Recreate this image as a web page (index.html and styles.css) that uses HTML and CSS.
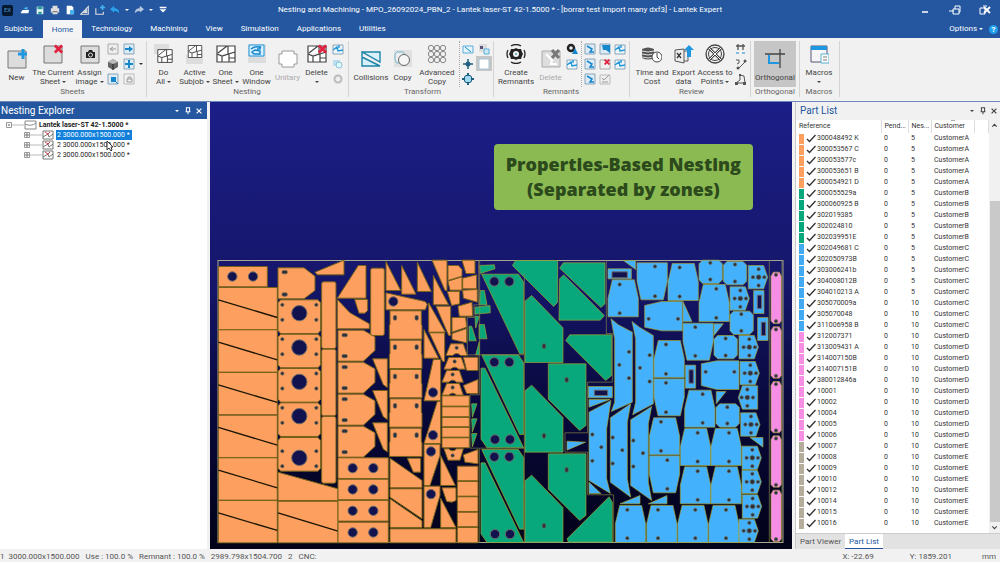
FILE: index.html
```html
<!DOCTYPE html>
<html lang="en">
<head>
    <meta charset="UTF-8">
    <meta name="viewport" content="width=device-width, initial-scale=1.0">
    <title>Nesting and Machining - Lantek Expert</title>
    <link rel="stylesheet" href="styles.css">
</head>
<body>
    <!-- shared icon shapes -->
    <svg class="defs" aria-hidden="true">
        <defs>
            <symbol id="sheet" viewBox="0 0 20 20"><path d="M1 2h18v17H1z" fill="#dcdcdc" stroke="#777"/></symbol>
            <symbol id="nest" viewBox="0 0 20 20"><path d="M1 2h18v16H1zM1 10l5 2 13-4M12 2v8M6 12v6M13 10v8M13 14h6M2 9l9-7" fill="#fff" stroke="#444" stroke-width="1.2"/></symbol>
            <symbol id="cross" viewBox="0 0 10 10"><path d="M1 1l8 8M9 1l-8 8" stroke="#e0203c" stroke-width="3"/></symbol>
            <symbol id="s-box" viewBox="0 0 12 12"><path d="M1 1h10v10H1z" fill="#dcebf5" stroke="#8aa5b8"/></symbol>
            <symbol id="s-nest" viewBox="0 0 12 12"><path d="M1 2h10v9H1z" fill="#eef6fb" stroke="#8aa5b8"/><path d="M1 7l4-3 1 4 5-1M7 2v3" fill="none" stroke="#2196d8" stroke-width="1.4"/></symbol>
            <symbol id="tick" viewBox="0 0 10 9"><path d="M1 5l2.500 2.500L9.500 1" fill="none" stroke="#333" stroke-width="1.300"/></symbol>
        </defs>
    </svg>

    <header class="titlebar">
        <div class="quick">
            <span class="logo">EX</span>
            <button aria-label="Open"><svg viewBox="0 0 12 12"><path d="M1 9l2-3h8l-1 4H1z" fill="#fff"/><path d="M4 4l5-2v4" fill="#46b4f0"/></svg></button>
            <button aria-label="Save"><svg viewBox="0 0 12 12"><path d="M2 2h8v9H2z" fill="#e8f6f4"/><path d="M3 2h6v3H3zM4 8h4v3H4z" fill="#279c9c"/></svg></button>
            <button aria-label="Print"><svg viewBox="0 0 12 12"><path d="M3 1h6v3H3zM1 4h10v5H1zM3 8h6v3H3z" fill="#ddd"/><path d="M3 8h6" stroke="#555"/></svg></button>
            <button aria-label="Report"><svg viewBox="0 0 12 12"><path d="M2 1h6l2 2v8H2z" fill="#fff"/><path d="M6 6h5v5H6z" fill="#46b4f0"/></svg></button>
            <button aria-label="Measure"><svg viewBox="0 0 12 12"><path d="M1 11L10 2v9zM5 9h3V6z" fill="none" stroke="#ddd" stroke-width="1.300"/></svg></button>
            <button aria-label="Add sheet"><svg viewBox="0 0 12 12"><path d="M1 4v7h9V8" fill="none" stroke="#ddd" stroke-width="1.300"/><path d="M9 0v6M6 3h6" stroke="#46b4f0" stroke-width="2"/></svg></button>
            <button aria-label="Undo"><svg viewBox="0 0 12 12"><path d="M0 5l5-4v3q6 0 6 6-2-3-6-3v2z" fill="#2aa2ec"/></svg></button>
            <i class="caret"></i>
            <button aria-label="Redo"><svg viewBox="0 0 12 12"><path d="M12 5L7 1v3Q1 4 1 10q2-3 6-3v2z" fill="#b9c8df"/></svg></button>
            <i class="caret"></i>
            <button aria-label="Customize"><svg viewBox="0 0 12 12"><path d="M2 2h8v2H2zM2 5h8l-4 4z" fill="#fff"/></svg></button>
        </div>
        <h1>Nesting and Machining - MPO_26092024_PBN_2 - Lantek laser-ST 42-1.5000 * - [borrar test import many dxf3] - Lantek Expert</h1>
        <div class="window-buttons">
            <button aria-label="Minimize"><svg viewBox="0 0 12 12"><path d="M3 8h6" stroke="#fff" stroke-width="1.500"/></svg></button>
            <button aria-label="Restore"><svg viewBox="0 0 12 12"><path d="M0 7h5M4 5h6v5H4zM6 5V2h5v6h-1" fill="none" stroke="#fff"/></svg></button>
            <button aria-label="Close"><svg viewBox="0 0 12 12"><path d="M1 4h5v6H1zM4 2h4" fill="none" stroke="#fff"/><path d="M5 3l6 6M11 3L5 9" stroke="#fff" stroke-width="1.800"/></svg></button>
        </div>
    </header>

    <nav class="menu">
        <a href="#subjobs">Subjobs</a>
        <a href="#home" class="active">Home</a>
        <a href="#technology">Technology</a>
        <a href="#machining">Machining</a>
        <a href="#view">View</a>
        <a href="#simulation">Simulation</a>
        <a href="#applications">Applications</a>
        <a href="#utilities">Utilities</a>
        <a href="#options" class="options">Options <i class="caret"></i></a>
        <button class="help" aria-label="Help">?</button>
    </nav>

    <div class="ribbon">
        <section class="group">
            <div class="tools">
                <button class="tool"><svg viewBox="0 0 20 20"><use href="#sheet"/><path d="M16 0v10M11 5h10" stroke="#1e96e0" stroke-width="3"/></svg>New</button>
                <button class="tool large"><svg viewBox="0 0 20 20"><use href="#sheet"/><use href="#cross" x="11" width="9" height="10"/></svg>The Current<br>Sheet <i class="caret"></i></button>
                <button class="tool"><svg viewBox="0 0 20 20"><use href="#sheet"/><path d="M6 8h2l1-2h3l1 2h2v6H6z" fill="#222"/><circle cx="10.500" cy="11" r="2" fill="#222" stroke="#ddd"/></svg>Assign<br>image <i class="caret"></i></button>
                <div class="small cols-2">
                    <button aria-label="Previous sheet"><svg viewBox="0 0 12 12"><path d="M1 1h10v10H1z" fill="#eee" stroke="#aaa"/><path d="M9 6H4M6 4L3 6l3 2" stroke="#999" fill="none"/></svg></button>
                    <button aria-label="Next sheet"><svg viewBox="0 0 12 12"><use href="#s-box"/><path d="M2 5h4V3l4 3-4 3V7H2z" fill="#1687cc"/></svg></button>
                    <button aria-label="3D sheet"><svg viewBox="0 0 12 12"><path d="M1 4l5-3 5 3v5l-5 3-5-3z" fill="#666"/><path d="M1 4l5 2 5-2-5-3z" fill="#bbb"/><path d="M6 6v6" stroke="#222"/></svg></button>
                    <button aria-label="Add"><svg viewBox="0 0 12 12"><use href="#s-box"/><path d="M6 2v8M2 6h8" stroke="#1687cc" stroke-width="2"/></svg></button>
                    <button aria-label="Corner"><svg viewBox="0 0 12 12"><use href="#s-box"/><path d="M4 4h5v5H4z" fill="#1687cc"/><path d="M8 8l3 3" stroke="#1687cc"/></svg></button>
                    <button aria-label="Lock"><svg viewBox="0 0 12 12"><path d="M1 1h10v10H1z" fill="#f3f3f3" stroke="#bbb"/><path d="M4 6h5v3H4zM5 6V4h3v2" stroke="#999" fill="none"/></svg></button>
                </div>
                <button class="more" aria-label="More"><i class="caret"></i></button>
            </div>
            <h2>Sheets</h2>
        </section>
        <section class="group">
            <div class="tools">
                <button class="tool"><svg viewBox="0 0 20 20"><path d="M0 0h15v10H0z" fill="#ddd"/><use href="#nest" x="2" y="4" width="18" height="16"/></svg>Do<br>All <i class="caret"></i></button>
                <button class="tool"><svg viewBox="0 0 20 20"><path d="M1 11h17v9H1z" fill="#ddd"/><use href="#nest" x="1" width="18" height="15"/></svg>Active<br>Subjob <i class="caret"></i></button>
                <button class="tool"><svg viewBox="0 0 20 20"><use href="#nest"/></svg>One<br>Sheet <i class="caret"></i></button>
                <button class="tool"><svg viewBox="0 0 20 20"><path d="M1 0h18v19H1z" fill="#ddd"/><path d="M2 1h15v11H2z" fill="#d8f0fc" stroke="#1e96e0"/><path d="M4 5q5-4 10-1M13 2v3h-3M5 8l3-2 5 1v3H7z" fill="none" stroke="#1687cc" stroke-width="1.500"/></svg>One<br>Window</button>
                <button class="tool" disabled><svg viewBox="0 0 20 20"><path d="M4 2h12v3h3v10h-3v3H4v-3H1V5h3z" fill="#fff" stroke="#999"/></svg>Unitary</button>
                <button class="tool narrow"><svg viewBox="0 0 20 20"><use href="#nest"/><use href="#cross" x="11" width="9" height="10"/></svg>Delete<br><i class="caret"></i></button>
                <div class="small">
                    <button aria-label="Nest options"><svg viewBox="0 0 12 12"><use href="#s-nest"/></svg></button>
                    <button aria-label="Nest search"><svg viewBox="0 0 12 12"><path d="M1 2h7v6H1z" fill="#bcdff0"/><circle cx="7" cy="7" r="3" fill="#dff" stroke="#8bbcd6"/></svg></button>
                    <button aria-label="Stop"><svg viewBox="0 0 12 12"><circle cx="6" cy="6" r="3.500" fill="#eee" stroke="#bbb" stroke-width="2"/></svg></button>
                </div>
            </div>
            <h2>Nesting</h2>
        </section>
        <section class="group indent">
            <div class="tools">
                <button class="tool wide"><svg viewBox="0 0 20 20"><path d="M1 7V3l18 10V3H1M19 17H1V8z" fill="#d8f0fa" stroke="#1c84a8" stroke-width="1.400"/></svg>Collisions</button>
                <button class="tool narrow"><svg viewBox="0 0 20 20"><path d="M1 1h18v17H1z" fill="#e0e0e0"/><path d="M4 3h6l2 3v5l-3 3H4l-2-3V5z" fill="#eee" stroke="#6fb5cc"/><circle cx="11" cy="11" r="5.500" fill="#f6f6f6" stroke="#666"/></svg>Copy</button>
                <button class="tool large"><svg viewBox="0 0 20 20"><g fill="#f0f0f0" stroke="#888"><circle cx="4" cy="4" r="2.700"/><circle cx="10" cy="4" r="2.700"/><circle cx="16" cy="4" r="2.700"/><circle cx="4" cy="10" r="2.700"/><circle cx="10" cy="10" r="2.700"/><circle cx="16" cy="10" r="2.700"/><circle cx="4" cy="16" r="2.700"/><circle cx="10" cy="16" r="2.700"/><circle cx="16" cy="16" r="2.700"/></g></svg>Advanced<br>Copy</button>
                <div class="small cols-2 dotted">
                    <button aria-label="Scale"><svg viewBox="0 0 12 12"><path d="M1 3h10v7H1z" fill="#e3f4fc" stroke="#5ab0d8"/><path d="M3 4l6 5" stroke="#1687cc"/></svg></button>
                    <button aria-label="Align"><svg viewBox="0 0 12 12"><path d="M1 1h8v8H1z" fill="#ddd"/><path d="M2 3h3v3H2z" fill="#557"/><path d="M6 6h5v5H6z" fill="#cdeaf8" stroke="#5ab0d8"/></svg></button>
                    <button aria-label="Move"><svg viewBox="0 0 12 12"><path d="M6 1v10M1 6h10" stroke="#20607f" stroke-width="1.500"/><circle cx="6" cy="6" r="2.500" fill="#20607f"/></svg></button>
                    <button aria-label="Frame" class="pressed"><svg viewBox="0 0 12 12"><path d="M1 1h10v10H1z" fill="#fff" stroke="#a9c4d4"/></svg></button>
                    <button aria-label="Center"><svg viewBox="0 0 12 12"><circle cx="6" cy="6" r="4" fill="#9fdaf0" stroke="#20607f"/><path d="M6 0v3M6 9v3M0 6h3M9 6h3" stroke="#20607f" stroke-width="2"/></svg></button>
                </div>
            </div>
            <h2>Transform</h2>
        </section>
        <section class="group">
            <div class="tools">
                <button class="tool large"><svg viewBox="0 0 20 20"><path d="M5 2q5-3 10 0M5 18q5 3 10 0M2 6q-2 4 0 8M18 6q2 4 0 8" fill="none" stroke="#222" stroke-width="1.300"/><path d="M10 4l2 1h3l1 3 1 2-1 2-1 3h-3l-2 1-2-1H5l-1-3-1-2 1-2 1-3h3z" fill="#222"/><circle cx="10" cy="10" r="3" fill="#f1f1f1"/><circle cx="10" cy="10" r="1" fill="#48a8b8"/></svg>Create<br>Remnants</button>
                <button class="tool narrow" disabled><svg viewBox="0 0 20 20"><path d="M1 2h18v16H1z" fill="#ddd" stroke="#aaa"/><path d="M5 5l6 6-1 4h6" fill="none" stroke="#fff" stroke-width="2"/><path d="M11 1l7 8M18 1l-7 8" stroke="#777" stroke-width="3"/></svg>Delete</button>
                <div class="small">
                    <button aria-label="Remnant settings"><svg viewBox="0 0 12 12"><circle cx="5" cy="5" r="3" fill="none" stroke="#222" stroke-width="2.500"/><path d="M6 11l3-6 3 6z" fill="#1687cc"/></svg></button>
                    <button aria-label="Remnant sheet"><svg viewBox="0 0 12 12"><use href="#s-nest"/></svg></button>
                </div>
                <div class="small cols-3 dotted">
                    <button aria-label="Remnant 1"><svg viewBox="0 0 12 12"><use href="#s-box"/><path d="M3 3l5 3-2 3h4" fill="none" stroke="#1687cc" stroke-width="1.500"/></svg></button>
                    <button aria-label="Remnant 2"><svg viewBox="0 0 12 12"><use href="#s-box"/><path d="M3 2h8v8L7 7H4z" fill="#1687cc"/></svg></button>
                    <button aria-label="Remnant 3"><svg viewBox="0 0 12 12"><use href="#s-nest"/></svg></button>
                    <button aria-label="Remnant 4"><svg viewBox="0 0 12 12"><use href="#s-box"/><path d="M3 3l5 3-2 3h4" fill="none" stroke="#1687cc" stroke-width="1.500"/></svg></button>
                    <button aria-label="Delete remnant"><svg viewBox="0 0 12 12"><path d="M1 2h10v9H1z" fill="#eee" stroke="#aaa"/><use href="#cross" x="5" y="1" width="6" height="6"/></svg></button>
                    <button aria-label="Remnant 5"><svg viewBox="0 0 12 12"><use href="#s-nest"/></svg></button>
                    <button aria-label="Remnant 6"><svg viewBox="0 0 12 12"><use href="#s-box"/><path d="M3 3l5 3-2 3h4" fill="none" stroke="#1687cc" stroke-width="1.500"/></svg></button>
                    <button aria-label="Remnant 7"><svg viewBox="0 0 12 12"><path d="M1 2h10v9H1z" fill="#eee" stroke="#bbb"/><path d="M3 5l2 2 5-5M3 9h6" stroke="#999" fill="none"/></svg></button>
                </div>
            </div>
            <h2>Remnants</h2>
        </section>
        <section class="group indent">
            <div class="tools">
                <button class="tool wide"><svg viewBox="0 0 20 20"><path d="M0 5q6-3 12 0v9q-6 3-12 0z" fill="#555"/><path d="M0 7q6 2 12 0M0 10q6 2 12 0M0 13q6 2 12 0" stroke="#ddd" fill="none"/><circle cx="15" cy="13" r="5" fill="#fff" stroke="#444"/><path d="M15 9v4l2 2" stroke="#444" fill="none"/></svg>Time and<br>Cost</button>
                <button class="tool narrow"><svg viewBox="0 0 20 20"><path d="M1 6l9-1v14l-9-2zM10 7h4v10h-4" fill="#eee" stroke="#555"/><path d="M3 9l4 5M7 9l-4 5" stroke="#333" stroke-width="1.300"/><path d="M13 13V6h-3l5-5 5 5h-3v7z" fill="#1e96e0"/></svg>Export<br>data</button>
                <button class="tool wide"><svg viewBox="0 0 20 20"><circle cx="10" cy="10" r="9" fill="none" stroke="#444" stroke-width="1.300"/><circle cx="10" cy="10" r="6.500" fill="none" stroke="#444"/><path d="M4 4l12 12M16 4L4 16" stroke="#444" stroke-width="2.500"/><path d="M4 4l12 12M16 4L4 16" stroke="#fff"/></svg>Access to<br>Points <i class="caret"></i></button>
                <div class="small">
                    <button aria-label="Distance"><svg viewBox="0 0 12 12"><path d="M1 3h9M3 1v6M8 1v6" stroke="#555" stroke-width="1.300"/><path d="M1 10h3M7 10h3" stroke="#1687cc"/></svg></button>
                    <button aria-label="Query"><svg viewBox="0 0 12 12"><path d="M1 2h3v3L2 6M3 11l8-8" stroke="#555" fill="none"/><circle cx="3" cy="10" r="1.500" fill="#555"/><circle cx="10" cy="3" r="1.500" fill="#555"/></svg></button>
                    <button aria-label="Area"><svg viewBox="0 0 12 12"><path d="M1 10l4-3V2l4 1 1 7z" stroke="#555" fill="none"/><path d="M0 9h3v3H0zM8 9h3v3H8zM4 1h2v2H4z" fill="#555"/></svg></button>
                </div>
            </div>
            <h2>Review</h2>
        </section>
        <section class="group padded">
            <div class="tools">
                <button class="tool large pressed"><svg viewBox="0 0 20 20"><path d="M0 5h20M15 0v19" stroke="#444" stroke-width="1.300"/><path d="M4 6v8h10" fill="none" stroke="#1e96e0" stroke-width="2"/></svg>Orthogonal</button>
            </div>
            <h2>Orthogonal</h2>
        </section>
        <section class="group">
            <div class="tools">
                <button class="tool wide"><svg viewBox="0 0 20 20"><path d="M2 2h16v16H2z" fill="#f6f6f6" stroke="#557"/><path d="M2 2h16v4H2z" fill="#1e96e0"/><path d="M12 10h8v9h-8z" fill="#fff" stroke="#5ab0d8"/><path d="M14 13h4M14 16h4" stroke="#777"/></svg>Macros<br><i class="caret"></i></button>
            </div>
            <h2>Macros</h2>
        </section>
    </div>

    <main class="workspace">
        <aside class="explorer">
            <div class="panel-title">
                <h2>Nesting Explorer</h2>
                <button aria-label="Menu"><i class="caret"></i></button>
                <button aria-label="Pin"><svg viewBox="0 0 10 10"><path d="M3 1h4v5H3zM2 6h6M5 6v3" fill="none" stroke="currentColor" stroke-width="1.300"/></svg></button>
                <button aria-label="Close"><svg viewBox="0 0 10 10"><path d="M2 2l6 6M8 2L2 8" stroke="currentColor" stroke-width="1.500"/></svg></button>
            </div>
            <ul class="tree">
                <li class="root"><svg class="toggle" viewBox="0 0 18 10"><path d="M6 5h12" stroke="#bbb"/><path d="M.5 2.500h5v5h-5z" fill="#fff" stroke="#999"/><path d="M2 5h2" stroke="#555"/></svg><svg viewBox="0 0 14 10"><path d="M1 1h11v8H1zM1 4q6 3 11-1" fill="#fff" stroke="#888"/></svg><b>Lantek laser-ST 42-1.5000 *</b></li>
                <li><svg class="toggle" viewBox="0 0 18 10"><path d="M6 5h12" stroke="#bbb"/><path d="M.5 2.500h5v5h-5z" fill="#fff" stroke="#999"/><path d="M1 5h4M3 3v4" stroke="#777"/></svg><svg viewBox="0 0 14 10"><path d="M1 1h10v8H1zM1 7l5-3 1 3 4-3" fill="#fff" stroke="#777"/><path d="M3 2l3 2M5 5l3-3" stroke="#d04050"/></svg><span class="selected">2 3000.000x1500.000 *</span></li>
                <li><svg class="toggle" viewBox="0 0 18 10"><path d="M6 5h12" stroke="#bbb"/><path d="M.5 2.500h5v5h-5z" fill="#fff" stroke="#999"/><path d="M1 5h4M3 3v4" stroke="#777"/></svg><svg viewBox="0 0 14 10"><path d="M1 1h10v8H1zM1 7l5-3 1 3 4-3" fill="#fff" stroke="#777"/><path d="M3 2l3 2M5 5l3-3" stroke="#d04050"/></svg><span>2 3000.000x1500.000 *</span><svg class="cursor" viewBox="0 0 8 12"><path d="M1 1v9l2-2 2 3 1-1-1-3h2z" fill="#fff" stroke="#333"/></svg></li>
                <li><svg class="toggle" viewBox="0 0 18 10"><path d="M6 5h12" stroke="#bbb"/><path d="M.5 2.500h5v5h-5z" fill="#fff" stroke="#999"/><path d="M1 5h4M3 3v4" stroke="#777"/></svg><svg viewBox="0 0 14 10"><path d="M1 1h10v8H1zM1 7l5-3 1 3 4-3" fill="#fff" stroke="#777"/><path d="M3 2l3 2M5 5l3-3" stroke="#d04050"/></svg><span>2 3000.000x1500.000 *</span></li>
            </ul>
        </aside>

        <section class="canvas">
            <svg class="drawing" viewBox="210 102 582 446" role="img" aria-label="Nested sheet">
                <defs>
                    <circle id="hole" r="14" class="hole"/>
                    <circle id="eye" r="5" class="eye"/>
                    <rect id="slot" x="-8" y="-5" width="16" height="10" rx="4" class="eye"/>
                    <rect id="vslot" x="-5" y="-7" width="10" height="14" rx="4" class="eye"/>
                    <g id="wedge"><path d="M13 0h177v127H13z"/><path d="M13 37l177 53" class="cut"/></g>
                    <g id="plate">
                        <path d="M200 0h112l8 9v83l-8 9H200l-8-9V9z"/>
                        <circle cx="256" cy="40" r="23" class="hole"/>
                        <use href="#eye" x="205" y="15"/><use href="#eye" x="307" y="15"/><use href="#eye" x="205" y="60"/><use href="#eye" x="307" y="60"/>
                    </g>
                    <g id="hexa"><path d="M-36 0h76l35 20v41l-35 32h-76z"/><use href="#slot" x="-16" y="15"/><use href="#slot" x="-16" y="78"/></g>
                    <g id="pair"><path d="M-36 0h151v62H-36z"/><use href="#hole" x="8" y="31"/><use href="#hole" x="70" y="31"/></g>
                    <g id="block"><path d="M120 0h94v42h2v43h-98V42h2z"/><use href="#vslot" x="135" y="21"/><use href="#vslot" x="200" y="21"/></g>
                    <g id="ear"><path d="M14 0h38l12 35H44q-12-12-24 0H0z"/><use href="#eye" x="32" y="12"/></g>
                    <path id="trap" d="M13 0h66l12 55v56H0V55z"/>
                    <path id="trap-down" d="M0 0h91v55l-12 56H12L0 55z"/>
                    <path id="octo" d="M11 0h48l11 11v48l-11 11H11L0 59V11z"/>
                    <g id="five"><path d="M0 0h46l12 35-12 35H0z"/><circle cx="31" cy="35" r="7" class="eye"/><use href="#eye" x="31" y="11"/><use href="#eye" x="31" y="60"/><use href="#eye" x="14" y="35"/><use href="#eye" x="48" y="35"/></g>
                    <g id="bar"><path d="M520 0h18l6 12v134l-6 8h-18l-7-8V12z"/><use href="#eye" x="528" y="8"/><use href="#eye" x="528" y="147"/></g>
                    <g id="frame"><path d="M0 0h31v69H0z"/><path d="M11 14h13v40H11z" class="hole"/></g>
                    <g id="sail"><path d="M20 0h110l16 24v215h-12z"/><use href="#hole" x="58" y="22"/><use href="#hole" x="103" y="22"/></g>
                    <g id="sail-up"><path d="M18 0h12l116 239H36l-18-26z"/><use href="#hole" x="60" y="214"/><use href="#hole" x="105" y="214"/></g>
                    <g id="tower"><path d="M150 17L170 0l94 97v104H150z"/><use href="#vslot" x="207" y="152"/></g>
                    <g id="shield"><path d="M220 0h113v185l-19 15-94-94z"/><use href="#vslot" x="275" y="48"/></g>
                </defs>

                <rect x="218" y="260" width="565" height="282" class="sheet"/>

                <!-- Customer A, left -->
                <g class="part a" transform="translate(214 255) scale(.3333)">
                    <path d="M13 33h147v61H13z"/><use href="#hole" x="55" y="63"/><use href="#hole" x="117" y="63"/>
                    <use href="#wedge" y="96"/><use href="#wedge" y="223"/><use href="#wedge" y="351"/><use href="#wedge" y="479"/><use href="#wedge" y="607"/><use href="#wedge" y="735"/>
                    <path d="M192 37h78l33 25v43l-33 25h-78z"/><use href="#slot" x="212" y="50"/><use href="#slot" x="212" y="117"/>
                    <path d="M303 50l87-36v44h-80z"/>
                    <use href="#plate" y="133"/><use href="#plate" y="236"/><use href="#plate" y="339"/><use href="#plate" y="442"/>
                    <use href="#plate" transform="matrix(1 0 0 -1 0 647)"/>
                    <rect x="323" y="79" width="43" height="200" rx="6"/><rect x="323" y="281" width="43" height="200" rx="6"/><rect x="323" y="483" width="43" height="200" rx="6"/>
                    <path d="M192 650l180 50v35H192zM192 737h180v125H192z"/><path d="M192 772l180 55" class="cut"/>
                </g>

                <!-- Customer A, right -->
                <g class="part a" transform="translate(350 255) scale(.3333)">
                    <path d="M-38 128l63-98h23v98zM14 132h39v33l-8 8H27zM-38 132l38 40 58 33v15h-96z"/>
                    <use href="#hexa" y="224"/><use href="#hexa" y="320"/><use href="#hexa" y="416"/><use href="#hexa" y="512"/>
                    <use href="#pair" y="607"/><use href="#pair" y="671"/><use href="#pair" y="735"/><use href="#pair" y="800"/>
                    <rect x="62" y="38" width="41" height="202" rx="6"/>
                    <path d="M68 310h44v86l-12-8zM68 405h44v87l-12-8zM68 502h44v87l-12-8z"/>
                    <path d="M108 18l44 87h-44zM155 30l43 86h-43zM202 20l42 88h-42zM246 14h45v91h-6zM250 60l46 88h-46z"/>
                    <path d="M294 30h31l11 12v20l-42 13zM294 77l42-13v40h-36zM336 14h39v40h-27zM338 68l42-10v42h-42zM292 108h37v37l-24 5zM338 104l44-2v38l-42-12zM324 152l42-12 2 42h-40z"/>
                    <path d="M108 112l117 26 7 8-6 17H108z"/><use href="#hole" x="130" y="138"/>
                    <use href="#block" y="166"/><use href="#block" y="254"/><use href="#block" y="342"/><use href="#block" y="430"/><use href="#block" y="518"/>
                    <path d="M236 142l50 88h-50zM258 152h44v88h-6zM222 222l44 86h-44zM238 232h46v86h-6z"/>
                    <path d="M306 186h41l3 29-44 15zM306 234l44-15v43l-44-10z"/>
                    <use href="#ear" x="288" y="265"/><use href="#ear" x="282" y="306"/><use href="#ear" x="276" y="345"/><use href="#ear" x="276" y="384"/>
                    <path d="M340 305h44v40h-34zM340 390l44-18v42h-34zM340 598l44-16v43l-39-5z"/>
                    <path d="M276 421h82v31h-82zM276 454h82v30h-82zM276 486h82v28h-82zM276 516h82v29h-82zM276 547h82v30h-82z"/>
                    <path d="M250 312h22v124h-50zM262 438h10v126h-50zM222 566h48v34l-30 90h-18zM222 692h48v28l-28 96h-20z"/>
                    <use href="#hole" x="249" y="411"/><use href="#hole" x="249" y="539"/><use href="#hole" x="243" y="588"/><use href="#hole" x="243" y="716"/>
                    <path d="M272 600l44 90h-44zM272 728l46 88h-46zM276 697h42v38l-12 5-16-2z"/>
                    <path d="M282 580h14q12 12 24 0h20l-10 34h-36z"/><use href="#eye" x="308" y="600"/>
                    <path d="M322 632h62v44h-62zM322 678h62v44h-62zM322 724h62v44h-62zM322 770h62v44h-62zM322 816h62v46h-62z"/>
                    <path d="M120 608l96 67v22h-96zM172 608h40v42h-22zM120 700h96v90l-96-65zM120 730l96 66v20h-96zM120 820h198v42H120z"/>
                    <path d="M386 14v134h-14v38h-20v112h36v120h-28v160h28v284" class="zone"/>
                </g>

                <!-- Customer B -->
                <g class="part b" transform="translate(475 255) scale(.3333)">
                    <path d="M14 30l44-2 2 12-44 14zM16 105h12l8 43H14zM0 155l45-5 1 22-46 4zM12 207h16l8 43H12zM0 182h13L2 218zM-18 212h8l14 44h-22zM13 258v40H2zM-10 445H6l-14 40zM-10 490H6l-14 40zM-10 534H6l-14 40z"/>
                    <use href="#sail" y="56"/><use href="#sail" y="298"/><use href="#sail-up" y="338"/><use href="#sail" y="582"/><use href="#sail-up" y="622"/>
                    <path d="M112 30l10-15h126v125l-12 13zM254 38l11-16h125v123l-12 11zM254 70l12-12 122 122-12 14H252zM272 255l12-17h126v122l-18 15zM276 850l126-126 10 16v120H280z"/>
                    <use href="#tower" y="120"/><use href="#tower" y="389"/><use href="#tower" y="659"/>
                    <use href="#shield" y="325"/><use href="#shield" y="595"/>
                    <path d="M14 14v284h134M148 56v804M14 578h134M394 14v220h18v146h-74v152h-68v58h68v128h78v142" class="zone"/>
                </g>

                <!-- Customer C, D -->
                <g class="part c" transform="translate(600 255) scale(.3333)">
                    <path d="M24 40h70v30H24zM-35 393h72v34h-72z"/><path d="M36 49h46v18H36zM-17 404h40v16h-40z" class="hole"/>
                    <path d="M-33 432h63l-63 23zM-33 470l66-35-13 85v150l11 44-64-39zM-33 680l36 34h-36zM-99 557l56 3-56 24z"/>
                    <path d="M70 15h37v27zM249 138l27 60h-27zM342 205h28l-28 35zM349 408h29l-29 37zM450 546h39v29zM60 745l60-25v25zM145 745l56-25v25z"/>
                    <path d="M33 190l22 18 42 22v210l-63 28 10-28V250zM96 198l22 17 42 25v205l-62 33 9-38V250zM31 487l61-42-10 55v170l10 55-61-45zM92 493l63-40-10 52v175l10 55-63-45z"/>
                    <path d="M134 150l51-12h62v88h-62l-51-11zM304 325l46-9h67v86h-67l-46-12z"/>
                    <use href="#trap" x="24" y="73"/><use href="#trap" x="204" y="24"/><use href="#trap" x="297" y="87"/><use href="#trap" x="162" y="255"/><use href="#trap" x="254" y="404"/><use href="#trap" x="148" y="487"/>
                    <use href="#trap" x="241" y="519"/><use href="#trap" x="333" y="519"/><use href="#trap" x="241" y="634"/><use href="#trap" x="333" y="634"/>
                    <use href="#trap" x="46" y="750"/><use href="#trap" x="140" y="750"/><use href="#trap" x="233" y="750"/><use href="#trap" x="326" y="750"/>
                    <use href="#trap-down" x="111" y="22"/><use href="#trap-down" x="249" y="203"/><use href="#trap-down" x="162" y="370"/><use href="#trap-down" x="148" y="601"/>
                    <use href="#octo" x="297" y="14"/><use href="#octo" x="370" y="18"/><use href="#octo" x="390" y="167"/><use href="#octo" x="342" y="240"/><use href="#octo" x="348" y="445"/>
                    <use href="#five" x="445" y="30"/><use href="#five" x="390" y="94"/><use href="#five" x="417" y="240"/><use href="#five" x="420" y="318"/><use href="#five" x="422" y="472"/><use href="#five" x="426" y="572"/><use href="#five" x="426" y="644"/><use href="#five" x="427" y="718"/><use href="#five" x="417" y="791"/>
                    <use href="#five" transform="matrix(-1 0 0 1 473 391)"/>
                    <use href="#frame" x="461" y="105"/><use href="#frame" x="473" y="186"/><use href="#frame" x="256" y="329"/>
                    <use href="#eye" x="59" y="87"/><use href="#eye" x="59" y="173"/><use href="#eye" x="165" y="33"/><use href="#eye" x="165" y="122"/><use href="#eye" x="239" y="36"/><use href="#eye" x="239" y="123"/>
                    <use href="#eye" x="331" y="22"/><use href="#eye" x="331" y="72"/><use href="#eye" x="405" y="27"/><use href="#eye" x="405" y="78"/><use href="#eye" x="349" y="100"/><use href="#eye" x="349" y="187"/>
                    <use href="#eye" x="146" y="190"/><use href="#eye" x="234" y="190"/><use href="#eye" x="424" y="176"/><use href="#eye" x="424" y="226"/><use href="#eye" x="286" y="215"/><use href="#eye" x="286" y="301"/>
                    <use href="#eye" x="377" y="249"/><use href="#eye" x="377" y="300"/><use href="#eye" x="198" y="267"/><use href="#eye" x="198" y="355"/><use href="#eye" x="317" y="349"/><use href="#eye" x="403" y="349"/>
                    <use href="#eye" x="198" y="382"/><use href="#eye" x="198" y="470"/><use href="#eye" x="308" y="416"/><use href="#eye" x="308" y="502"/><use href="#eye" x="382" y="455"/><use href="#eye" x="382" y="504"/>
                    <use href="#eye" x="183" y="499"/><use href="#eye" x="183" y="586"/><use href="#eye" x="202" y="614"/><use href="#eye" x="202" y="700"/><use href="#eye" x="293" y="532"/><use href="#eye" x="293" y="618"/>
                    <use href="#eye" x="387" y="532"/><use href="#eye" x="387" y="618"/><use href="#eye" x="293" y="647"/><use href="#eye" x="293" y="733"/><use href="#eye" x="387" y="647"/><use href="#eye" x="387" y="733"/>
                    <use href="#eye" x="82" y="763"/><use href="#eye" x="82" y="848"/><use href="#eye" x="174" y="763"/><use href="#eye" x="174" y="848"/><use href="#eye" x="286" y="763"/><use href="#eye" x="286" y="848"/><use href="#eye" x="378" y="763"/><use href="#eye" x="378" y="848"/>
                    <use href="#eye" x="87" y="289"/><use href="#eye" x="58" y="328"/><use href="#eye" x="87" y="368"/><use href="#eye" x="149" y="299"/><use href="#eye" x="120" y="337"/><use href="#eye" x="149" y="378"/>
                    <use href="#eye" x="38" y="546"/><use href="#eye" x="67" y="584"/><use href="#eye" x="38" y="624"/><use href="#eye" x="100" y="555"/><use href="#eye" x="129" y="593"/><use href="#eye" x="100" y="633"/><use href="#eye" x="-23" y="537"/><use href="#eye" x="4" y="575"/><use href="#eye" x="-23" y="616"/>
                    <path d="M508 14v846M546 14v846" class="zone"/>
                    <g class="d"><use href="#bar" y="50"/><use href="#bar" y="214"/><use href="#bar" y="378"/><use href="#bar" y="541"/><use href="#bar" y="704"/></g>
                </g>
            </svg>
            <div class="banner">Properties-Based Nesting<br>(Separated by zones)</div>
        </section>

        <aside class="parts">
            <div class="panel-title light">
                <h2>Part List</h2>
                <button aria-label="Menu"><i class="caret"></i></button>
                <button aria-label="Pin"><svg viewBox="0 0 10 10"><path d="M3 1h4v5H3zM2 6h6M5 6v3" fill="none" stroke="currentColor" stroke-width="1.300"/></svg></button>
                <button aria-label="Close"><svg viewBox="0 0 10 10"><path d="M2 2l6 6M8 2L2 8" stroke="currentColor" stroke-width="1.500"/></svg></button>
            </div>
            <div class="list">
                <table>
                    <colgroup><col class="col-ref"><col class="col-pend"><col class="col-nes"><col class="col-customer"><col></colgroup>
                    <thead><tr><th>Reference</th><th>Pend...</th><th>Nes...</th><th class="sorted">Customer</th><th></th></tr></thead>
                    <tbody class="row-a">
                        <tr><td><svg><use href="#tick"/></svg>300048492 K</td><td>0</td><td>5</td><td>CustomerA</td></tr>
                        <tr><td><svg><use href="#tick"/></svg>300053567 C</td><td>0</td><td>5</td><td>CustomerA</td></tr>
                        <tr><td><svg><use href="#tick"/></svg>300053577c</td><td>0</td><td>5</td><td>CustomerA</td></tr>
                        <tr><td><svg><use href="#tick"/></svg>300053651 B</td><td>0</td><td>5</td><td>CustomerA</td></tr>
                        <tr><td><svg><use href="#tick"/></svg>300054921 D</td><td>0</td><td>5</td><td>CustomerA</td></tr>
                    </tbody>
                    <tbody class="row-b">
                        <tr><td><svg><use href="#tick"/></svg>300055529a</td><td>0</td><td>5</td><td>CustomerB</td></tr>
                        <tr><td><svg><use href="#tick"/></svg>300060925 B</td><td>0</td><td>5</td><td>CustomerB</td></tr>
                        <tr><td><svg><use href="#tick"/></svg>302019385</td><td>0</td><td>5</td><td>CustomerB</td></tr>
                        <tr><td><svg><use href="#tick"/></svg>302024810</td><td>0</td><td>5</td><td>CustomerB</td></tr>
                        <tr><td><svg><use href="#tick"/></svg>302039951E</td><td>0</td><td>5</td><td>CustomerB</td></tr>
                    </tbody>
                    <tbody class="row-c">
                        <tr><td><svg><use href="#tick"/></svg>302049681 C</td><td>0</td><td>5</td><td>CustomerC</td></tr>
                        <tr><td><svg><use href="#tick"/></svg>302050973B</td><td>0</td><td>5</td><td>CustomerC</td></tr>
                        <tr><td><svg><use href="#tick"/></svg>303006241b</td><td>0</td><td>5</td><td>CustomerC</td></tr>
                        <tr><td><svg><use href="#tick"/></svg>304008012B</td><td>0</td><td>5</td><td>CustomerC</td></tr>
                        <tr><td><svg><use href="#tick"/></svg>304010213 A</td><td>0</td><td>5</td><td>CustomerC</td></tr>
                        <tr><td><svg><use href="#tick"/></svg>305070009a</td><td>0</td><td>10</td><td>CustomerC</td></tr>
                        <tr><td><svg><use href="#tick"/></svg>305070048</td><td>0</td><td>10</td><td>CustomerC</td></tr>
                        <tr><td><svg><use href="#tick"/></svg>311006958 B</td><td>0</td><td>10</td><td>CustomerC</td></tr>
                    </tbody>
                    <tbody class="row-d">
                        <tr><td><svg><use href="#tick"/></svg>312007371</td><td>0</td><td>10</td><td>CustomerD</td></tr>
                        <tr><td><svg><use href="#tick"/></svg>313009431 A</td><td>0</td><td>10</td><td>CustomerD</td></tr>
                        <tr><td><svg><use href="#tick"/></svg>314007150B</td><td>0</td><td>10</td><td>CustomerD</td></tr>
                        <tr><td><svg><use href="#tick"/></svg>314007151B</td><td>0</td><td>10</td><td>CustomerD</td></tr>
                        <tr><td><svg><use href="#tick"/></svg>380012846a</td><td>0</td><td>10</td><td>CustomerD</td></tr>
                        <tr><td><svg><use href="#tick"/></svg>10001</td><td>0</td><td>10</td><td>CustomerD</td></tr>
                        <tr><td><svg><use href="#tick"/></svg>10002</td><td>0</td><td>10</td><td>CustomerD</td></tr>
                        <tr><td><svg><use href="#tick"/></svg>10004</td><td>0</td><td>10</td><td>CustomerD</td></tr>
                        <tr><td><svg><use href="#tick"/></svg>10005</td><td>0</td><td>10</td><td>CustomerD</td></tr>
                        <tr><td><svg><use href="#tick"/></svg>10006</td><td>0</td><td>10</td><td>CustomerD</td></tr>
                    </tbody>
                    <tbody class="row-e">
                        <tr><td><svg><use href="#tick"/></svg>10007</td><td>0</td><td>10</td><td>CustomerE</td></tr>
                        <tr><td><svg><use href="#tick"/></svg>10008</td><td>0</td><td>10</td><td>CustomerE</td></tr>
                        <tr><td><svg><use href="#tick"/></svg>10009</td><td>0</td><td>10</td><td>CustomerE</td></tr>
                        <tr><td><svg><use href="#tick"/></svg>10010</td><td>0</td><td>10</td><td>CustomerE</td></tr>
                        <tr><td><svg><use href="#tick"/></svg>10012</td><td>0</td><td>10</td><td>CustomerE</td></tr>
                        <tr><td><svg><use href="#tick"/></svg>10014</td><td>0</td><td>10</td><td>CustomerE</td></tr>
                        <tr><td><svg><use href="#tick"/></svg>10015</td><td>0</td><td>10</td><td>CustomerE</td></tr>
                        <tr><td><svg><use href="#tick"/></svg>10016</td><td>0</td><td>10</td><td>CustomerE</td></tr>
                    </tbody>
                </table>
                <div class="scrollbar">
                    <svg viewBox="0 0 10 10"><path d="M3 6l2-2 2 2" fill="none" stroke="#444"/></svg>
                    <div class="track"><div class="thumb"></div></div>
                    <svg viewBox="0 0 10 10"><path d="M3 4l2 2 2-2" fill="none" stroke="#444"/></svg>
                </div>
            </div>
            <div class="panel-tabs">
                <a href="#viewer">Part Viewer</a>
                <a href="#list" class="active">Part List</a>
            </div>
        </aside>
    </main>

    <footer class="status">
        <span>1&nbsp; 3000.000x1500.000</span>
        <span>Use : 100.0 %</span>
        <span>Remnant : 100.0 %</span>
        <span>2989.798x1504.700</span>
        <span>2</span>
        <span>CNC:</span>
        <span class="pos-x">X: -22.69</span>
        <span class="pos-y">Y: 1859.201</span>
        <span>mm</span>
    </footer>
</body>
</html>
```
FILE: styles.css
```css
* {
    box-sizing: border-box;
}

body {
    margin: 0;
    height: 100vh;
    display: flex;
    flex-direction: column;
    overflow: hidden;
    background: #f1f1f1;
    color: #333;
    font-family: Roboto, "Open Sans", sans-serif;
    font-size: 8px;
    line-height: 10px;
}

h1, h2, ul {
    margin: 0;
    padding: 0;
    font-weight: normal;
}

button {
    border: 0;
    padding: 0;
    background: none;
    color: inherit;
    font: inherit;
    white-space: nowrap;
}

a {
    color: inherit;
    text-decoration: none;
}

svg {
    display: block;
}

.defs {
    position: absolute;
    width: 0;
    height: 0;
}

.caret {
    display: inline-block;
    border: 2px solid transparent;
    border-top-color: currentColor;
    border-bottom: 0;
    vertical-align: middle;
}

/* title bar */
.titlebar {
    display: grid;
    grid-template-columns: 1fr auto 1fr;
    align-items: center;
    height: 20px;
    background: #2457a0;
    color: #fff;
}

.titlebar h1 {
    font-size: 8px;
}

.quick {
    display: flex;
    align-items: center;
    gap: 5px;
    padding-left: 2px;
}

.quick svg {
    width: 10px;
    height: 10px;
}

.logo {
    width: 11px;
    height: 11px;
    margin-right: 2px;
    border-radius: 2px;
    background: #06182e;
    color: #4a90c8;
    font-size: 6px;
    line-height: 10px;
    text-align: center;
}

.window-buttons {
    display: flex;
    justify-content: flex-end;
    gap: 18px;
    padding-right: 9px;
}

.window-buttons svg {
    width: 12px;
    height: 12px;
}

/* menu tabs */
.menu {
    display: flex;
    align-items: center;
    height: 18px;
    background: #2457a0;
    color: #fff;
    font-size: 8px;
}

.menu a {
    padding: 0 9px;
    line-height: 20px;
}

.menu a:first-child {
    padding: 0 10px 0 4px;
}

.menu .active {
    height: 18px;
    background: #f4f4f4;
    color: #2457a0;
}

.menu .options {
    margin-left: auto;
    padding-right: 6px;
}

.help {
    width: 9px;
    height: 9px;
    margin-right: 2px;
    border-radius: 50%;
    background: #1ea0ee;
    font-weight: bold;
    line-height: 9px;
}

/* ribbon */
.ribbon {
    display: flex;
    height: 64px;
    padding: 3px 0 4px;
    border-bottom: 1px solid #6f86bb;
}

.group {
    display: flex;
    flex-direction: column;
    padding: 0 2px 0 1px;
    border-right: 1px solid #d4d4d4;
}

.group.indent {
    padding: 0 1px 0 4px;
}

.group.padded {
    padding: 0 3px;
}

.group h2 {
    margin-top: auto;
    color: #666;
    font-size: 8px;
    text-align: center;
}

.tools {
    display: flex;
    height: 46px;
}

.tool {
    display: flow-root;
    width: 31px;
    height: 46px;
    padding-top: 2px;
    color: #444;
    line-height: 9px;
    text-align: center;
}

.tool > svg {
    width: 20px;
    height: 20px;
    margin: 0 auto 4px;
}

.tool.narrow {
    width: 27px;
}

.tool.wide {
    width: 36px;
}

.tool.large {
    width: 42px;
}

.tool:disabled {
    color: #aaa;
}

.more {
    width: 7px;
}

.pressed {
    background: #c6c6c6;
}

.small {
    display: grid;
    grid-template-columns: 16px;
    grid-auto-rows: 15px;
}

.small.cols-2 {
    grid-template-columns: 16px 16px;
}

.small.cols-3 {
    grid-template-columns: 15px 15px 15px;
}

.small.dotted {
    margin-left: 1px;
    border-left: 1px dotted #aaa;
}

.small button {
    display: grid;
    place-items: center;
}

.small svg {
    width: 12px;
    height: 12px;
}

/* workspace */
.workspace {
    display: flex;
    flex: 1;
    min-height: 0;
}

.explorer {
    display: flex;
    flex-direction: column;
    width: 207px;
    background: #fff;
}

.panel-title {
    display: flex;
    align-items: center;
    gap: 3px;
    height: 17px;
    padding: 0 4px 0 1px;
    background: #2457a0;
    color: #fff;
}

.panel-title h2 {
    flex: 1;
    font-size: 10px;
    line-height: 16px;
}

.panel-title button {
    width: 8px;
    display: grid;
    place-items: center;
}

.panel-title svg {
    width: 8px;
    height: 8px;
}

.panel-title.light {
    height: 18px;
    padding: 0 2px 0 4px;
    background: #f1f1f1;
    color: #444;
}

.panel-title.light h2 {
    color: #2457a0;
}

.tree {
    padding: 1px 0 0 24px;
    font-size: 7px;
    list-style: none;
}

.tree li {
    position: relative;
    display: flex;
    align-items: center;
    height: 10px;
    color: #222;
}

.tree .root {
    margin-left: -18px;
}

.tree b {
    margin-left: 1px;
}

.tree span {
    padding: 0 2px 0 1px;
}

.tree svg {
    width: 14px;
    height: 10px;
}

.tree .toggle {
    width: 18px;
}

.tree .selected {
    background: #1080dc;
    color: #fff;
}

.tree .cursor {
    position: absolute;
    left: 82px;
    top: 0;
    width: 8px;
    height: 12px;
}

/* nesting canvas */
.canvas {
    position: relative;
    flex: 1;
    margin: 0 3px;
    background: linear-gradient(#1c1e88, #15166a 40%, #08083a 70%, #020218);
}

.drawing {
    width: 100%;
    height: 100%;
}

.sheet {
    fill: none;
    stroke: #a5a590;
}

.part {
    stroke: #a9a32c;
    stroke-width: 2;
}

.a {
    fill: #fc9f5f;
    stroke: #75621a;
    stroke-width: 3;
}

.b {
    fill: #08a87c;
}

.c {
    fill: #43b1fb;
}

.d {
    fill: #f78ee6;
}

.hole {
    fill: #12124e;
    stroke: #6f6a68;
    stroke-width: 3;
}

.eye {
    fill: #2b3040;
    stroke: #6f6a50;
    stroke-width: 2;
}

.cut {
    stroke: #191402;
    stroke-width: 4;
}

.zone {
    fill: none;
    stroke: #8d8a44;
    stroke-width: 2;
}

.banner {
    position: absolute;
    top: 42px;
    right: 39px;
    padding: 8px 12px;
    border-radius: 4px;
    background: #8bba52;
    color: #2c4a1c;
    font-family: "Open Sans", sans-serif;
    font-size: 18px;
    font-weight: 800;
    line-height: 25px;
    text-align: center;
    white-space: nowrap;
}

/* part list */
.parts {
    display: flex;
    flex-direction: column;
    width: 205px;
    border-left: 1px solid #c8c8c8;
}

.list {
    display: flex;
    flex: 1;
    min-height: 0;
    background: #fff;
    border-bottom: 1px solid #ccc;
}

.list table {
    flex: 1;
    align-self: flex-start;
    table-layout: fixed;
    border-collapse: collapse;
    color: #333;
    font-size: 7px;
    line-height: 9px;
}

.col-ref {
    width: 85px;
}

.col-pend {
    width: 27px;
}

.col-nes {
    width: 23px;
}

.col-customer {
    width: 43px;
}

.list th {
    height: 13px;
    padding: 0 0 0 3px;
    border-right: 1px solid #ddd;
    font-weight: normal;
    text-align: left;
    white-space: nowrap;
}

.list td {
    height: 11px;
    padding: 0 0 0 3px;
    white-space: nowrap;
}

.list td:first-child {
    display: flex;
    align-items: center;
    gap: 1px;
    padding: 0;
}

.list td:first-child::before {
    content: "";
    width: 5px;
    height: 10px;
    margin: 0 1px 0 3px;
    background: #fc9f5f;
}

.list td svg {
    width: 10px;
    height: 9px;
}

.list .row-b td::before {
    background: #08a87c;
}

.list .row-c td::before {
    background: #43a9f0;
}

.list .row-d td::before {
    background: #f78ee6;
}

.list .row-e td::before {
    background: #b5ad9b;
}

.list .sorted {
    background: linear-gradient(#aaa, #aaa) center top / 4px 1px no-repeat;
}

.scrollbar {
    display: flex;
    flex-direction: column;
    width: 11px;
    background: #f1f1f1;
}

.scrollbar .track {
    flex: 1;
    display: flex;
    flex-direction: column;
    justify-content: flex-end;
}

.scrollbar .thumb {
    height: 82%;
    margin-left: 1px;
    background: #c9c9c9;
}

.panel-tabs {
    display: flex;
    height: 15px;
    background: #e2e2e2;
    color: #555;
    font-size: 8px;
}

.panel-tabs a {
    padding: 0 4px;
    line-height: 16px;
}

.panel-tabs .active {
    background: #fff;
    border-bottom: 1px solid #2457a0;
    color: #2457a0;
}

/* status bar */
.status {
    display: flex;
    align-items: center;
    gap: 6px;
    height: 13px;
    padding: 2px 4px 0 0;
    color: #555;
    font-size: 8px;
}

.pos-x {
    margin-left: auto;
}

.pos-y {
    margin: 0 24px 0 30px;
}
```
